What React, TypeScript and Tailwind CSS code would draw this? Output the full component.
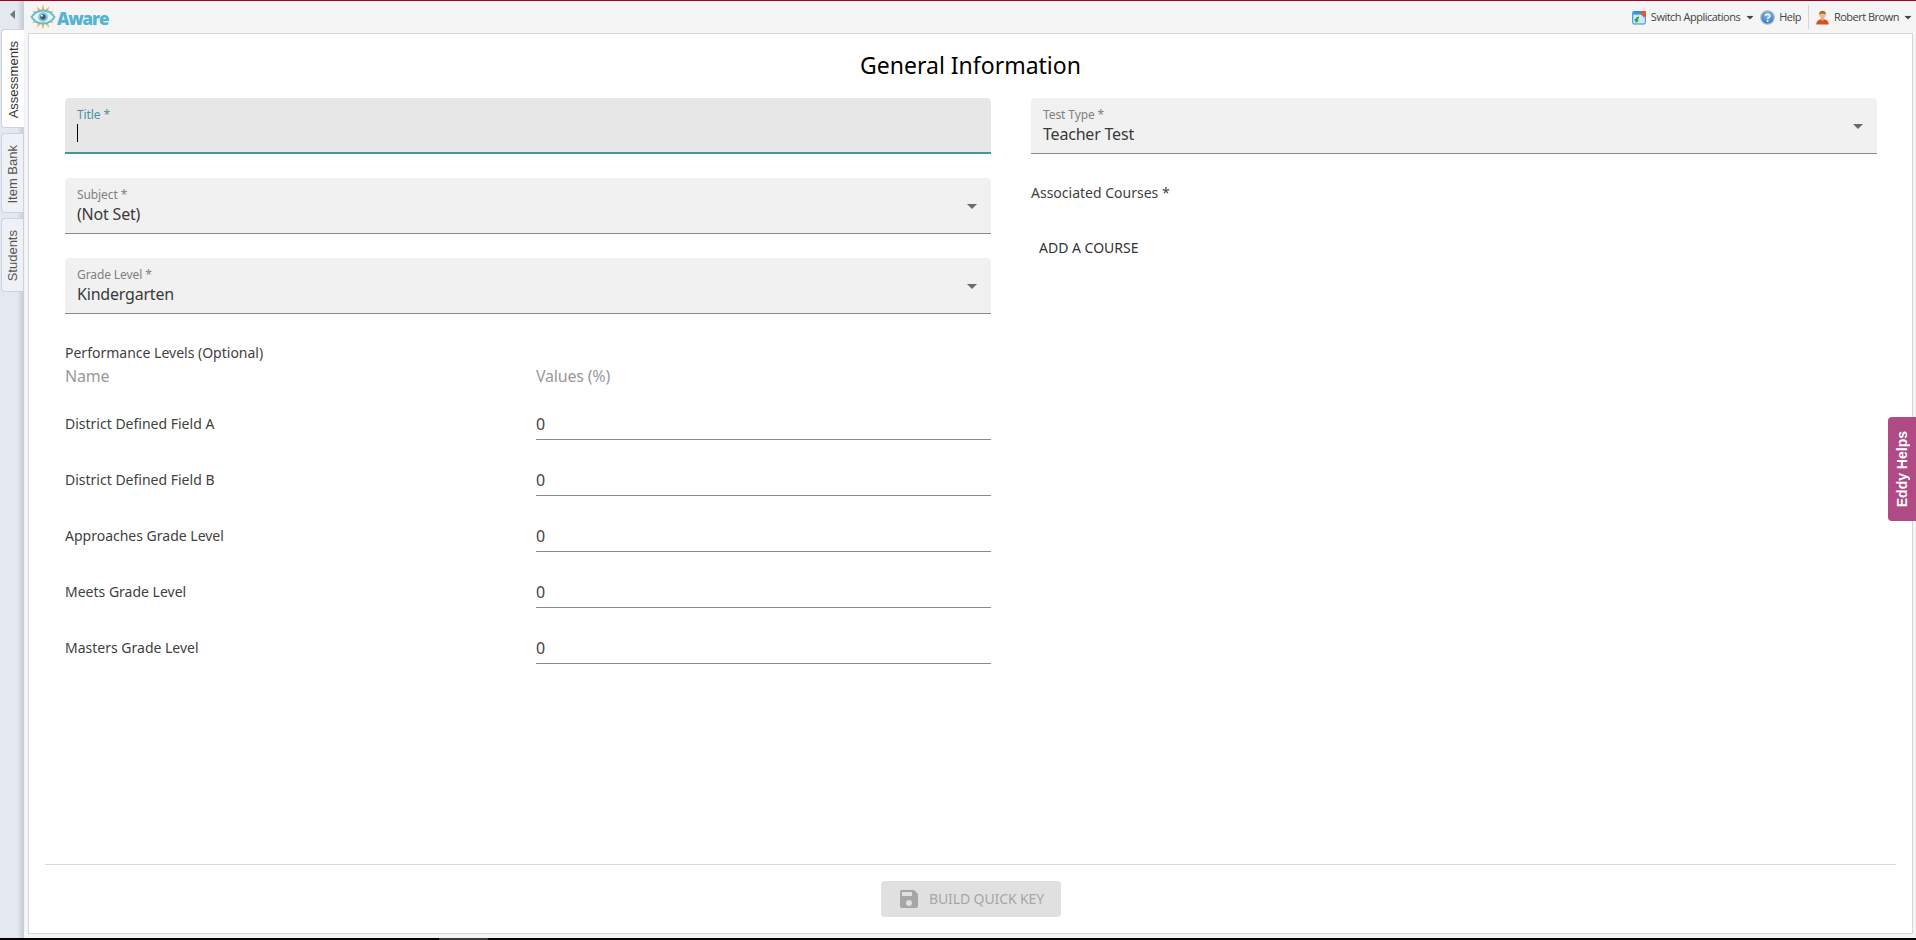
const ubuntu = "font-['Noto_Sans',sans-serif]";

function Caret({ className = "" }: { className?: string }) {
  return (
    <svg width="10" height="5" viewBox="0 0 10 5" className={className}>
      <path d="M0 0h10L5 5z" fill="currentColor" />
    </svg>
  );
}

function Logo() {
  const rays = Array.from({ length: 12 }, (_, i) => i * 30);
  return (
    <div className="flex items-center">
      <svg width="26" height="26" viewBox="0 0 26 26">
        {rays.map((r) => (
          <path key={r} d="M13 0.5l1.6 6h-3.2z" fill="#f4b04f" transform={`rotate(${r} 13 13)`} />
        ))}
        <circle cx="13" cy="13" r="7" fill="#f9d59a" />
        <path d="M1.5 13C5 7.5 9 6.5 13 6.5s8 1 11.5 6.5C21 18.5 17 19.5 13 19.5S5 18.500 1.500 13z" fill="#e6f4f8" stroke="#63bad3" strokeWidth="1.8" />
        <circle cx="13" cy="13" r="5" fill="#8ccbdd" />
        <circle cx="13" cy="13" r="2.800" fill="#4d5a66" />
        <circle cx="11.800" cy="11.800" r="1" fill="#fff" />
      </svg>
      <span className="ml-[1px] mt-[3px] font-['Open_Sans',sans-serif] text-[17px] font-extrabold leading-none tracking-[-1.1px] text-[#55b4d0]">Aware</span>
    </div>
  );
}

function SwitchIcon() {
  return (
    <svg width="15" height="15" viewBox="0 0 15 15">
      <rect x="0.700" y="1.500" width="12.600" height="12.500" rx="1.200" fill="#cfe8fb" stroke="#2a8be0" />
      <rect x="1.200" y="2" width="11.600" height="2.600" fill="#2f9bf0" />
      <path d="M8.500 1h5.500v5.500h-1.500v1.500L8.500 4z" fill="#e8572a" />
      <path d="M6.500 6.500C4.500 6.800 3.800 8 3.600 9.200L2 8.800l1.800 4 3.600-2-1.600-.6c.2-1 .6-2 1.500-2.400z" fill="#2fb02f" />
    </svg>
  );
}

function HelpIcon() {
  return (
    <svg width="15" height="15" viewBox="0 0 15 15">
      <defs>
        <radialGradient id="helpBall" cx="50%" cy="30%" r="75%">
          <stop offset="0%" stopColor="#8dc0ee" />
          <stop offset="100%" stopColor="#2a6cc0" />
        </radialGradient>
      </defs>
      <circle cx="7.500" cy="7.500" r="6.700" fill="url(#helpBall)" stroke="#a8b6c6" strokeWidth="1.200" />
      <path d="M5.500 5.900c.3-2.400 4.300-2.200 4.200.2 0 1.700-2 1.500-2 3" fill="none" stroke="#fff" strokeWidth="1.500" />
      <circle cx="7.600" cy="11" r="1" fill="#fff" />
    </svg>
  );
}

function UserIcon() {
  return (
    <svg width="13" height="15" viewBox="0 0 13 15">
      <path d="M0.300 14.500c0-3.800 2.400-5.200 6.200-5.200s6.200 1.400 6.200 5.200z" fill="#d6511f" />
      <rect x="5" y="7.500" width="3" height="3" fill="#e6a878" />
      <circle cx="6.500" cy="4.800" r="3.300" fill="#eeb98a" />
      <path d="M3.100 4.600C3 1.500 5 .8 6.500 .8s3.500.7 3.400 3.800C8.600 3.300 4.500 3.300 3.100 4.600z" fill="#a8702a" />
    </svg>
  );
}

function FilledField({
  label,
  value,
  focused,
  select,
  className = "",
}: {
  label: string;
  value?: string;
  focused?: boolean;
  select?: boolean;
  className?: string;
}) {
  return (
    <div
      className={`relative h-14 rounded-t px-3 pt-[9px] ${
        focused ? "bg-[#e7e7e7] border-b-2 border-[#4c919e]" : "bg-[#f1f1f1] border-b border-[#8a8a8a]"
      } ${className}`}
    >
      <div className={`text-xs leading-[16px] tracking-[-0.1px] ${focused ? "text-[#4c919e]" : "text-[#808080]"}`}>{label}</div>
      {focused ? (
        <div className="mt-[1px] h-[18px] w-px bg-black" />
      ) : (
        <div className="-mt-px text-base leading-[24px] tracking-[-0.2px] text-[#3a3a3a]">{value}</div>
      )}
      {select && <Caret className="absolute right-[14px] top-[26px] text-[#6b6b6b]" />}
    </div>
  );
}

function LevelRow({ label }: { label: string }) {
  return (
    <div className="flex h-[56px] items-start">
      <div className="w-[471px] pt-[13px] text-sm leading-[24px] text-[#3f3f3f]">{label}</div>
      <div className="h-[41px] flex-1 border-b border-[#8a8a8a] pt-[13px] text-base leading-[24px] text-[#444]">0</div>
    </div>
  );
}

function Tab({ label, h, active }: { label: string; h: string; active?: boolean }) {
  return (
    <div
      className={`flex ${h} items-center justify-center rounded-l border border-r-0 border-[#ccd2e0] pt-[2px] ${
        active ? "w-[23px] bg-white text-[#333]" : "w-[22px] bg-[#eef1f5] text-[#555]"
      }`}
    >
      <span className="rotate-180 font-['Liberation_Sans',sans-serif] text-[13px] leading-none [writing-mode:vertical-rl]">{label}</span>
    </div>
  );
}

export default function App() {
  return (
    <div className={`relative flex h-[940px] w-[1916px] flex-col overflow-hidden bg-[#e4e9ef] ${ubuntu}`}>
      <div className="h-px bg-[#a5001e]" />
      <div className="flex min-h-0 flex-1">
        {/* left rail */}
        <div className="flex w-[24px] flex-col items-end bg-[linear-gradient(to_right,#e4e9ef_72%,#c6cdd3_96%,#cfd5e3_100%)]">
          <div className="flex h-[28px] w-full items-center justify-center pb-[1px] text-[#6f7780]">
            <svg width="5" height="9" viewBox="0 0 5 9"><path d="M5 0v9L0 4.500z" fill="currentColor" /></svg>
          </div>
          <div className="flex flex-col gap-[5px] pl-[2px]">
            <Tab label="Assessments" h="h-[99px]" active />
            <Tab label="Item Bank" h="h-[80px]" />
            <Tab label="Students" h="h-[74px]" />
          </div>
        </div>
        {/* main */}
        <div className="flex min-w-0 flex-1 flex-col bg-[#f5f5f5]">
          <div className="flex h-[32px] items-center justify-between pr-[3px] pl-[6px]">
            <div className="-mt-[1px]"><Logo /></div>
            <div className="flex items-center font-['Open_Sans',sans-serif] text-[11px] tracking-[-0.5px] text-[#444]">
              <SwitchIcon />
              <span className="ml-[4px]">Switch Applications</span>
              <Caret className="ml-[5px] scale-75" />
              <span className="ml-[5px]"><HelpIcon /></span>
              <span className="ml-[4px]">Help</span>
              <span className="mx-[7px] h-[24px] w-px bg-[#cfd5e3]" />
              <UserIcon />
              <span className="ml-[5px]">Robert Brown</span>
              <Caret className="ml-[4px] scale-75" />
            </div>
          </div>
          {/* content panel */}
          <div className="ml-[4px] mr-[3px] flex h-[901px] flex-col border border-[#d3d6e4] bg-white">
            <h1 className="pt-[15px] text-center text-[23px] leading-[32px] text-black">General Information</h1>
            <div className="flex flex-1 gap-[40px] pl-[36px] pr-[35px] pt-[17px]">
              <div className="flex w-[926px] flex-col">
                <FilledField label="Title *" focused />
                <FilledField label="Subject *" value="(Not Set)" select className="mt-6" />
                <FilledField label="Grade Level *" value="Kindergarten" select className="mt-6" />
                <div className="mt-[28px] text-sm leading-[22px] text-[#3f3f3f]">Performance Levels (Optional)</div>
                <div className="flex text-base leading-[24px] tracking-[-0.2px] text-[#999]">
                  <div className="w-[471px]">Name</div>
                  <div>Values (%)</div>
                </div>
                <div className="mt-[11px]">
                  <LevelRow label="District Defined Field A" />
                  <LevelRow label="District Defined Field B" />
                  <LevelRow label="Approaches Grade Level" />
                  <LevelRow label="Meets Grade Level" />
                  <LevelRow label="Masters Grade Level" />
                </div>
              </div>
              <div className="flex flex-1 flex-col">
                <FilledField label="Test Type *" value="Teacher Test" select />
                <div className="mt-[28px] text-sm leading-[22px] text-[#3f3f3f]">Associated Courses *</div>
                <div className="mt-[32px] pl-2 text-sm leading-[24px] text-[#333]">ADD A COURSE</div>
              </div>
            </div>
            <div className="mx-[16px] flex h-[69px] justify-center border-t border-[#d9d9d9] pt-[16px]">
              <div className="flex h-[36px] w-[180px] items-center justify-center gap-[8px] rounded bg-[#e0e0e0] text-sm tracking-[-0.1px] text-[#a6a6a6]">
                <svg width="24" height="24" viewBox="0 0 24 24"><path fill="currentColor" d="M17 3H5a2 2 0 0 0-2 2v14a2 2 0 0 0 2 2h14a2 2 0 0 0 2-2V7zm-5 16a3 3 0 1 1 0-6 3 3 0 0 1 0 6zm3-10H5V5h10z" /></svg>
                BUILD QUICK KEY
              </div>
            </div>
          </div>
          <div className="flex-1" />
        </div>
      </div>
      <div className="flex h-[2px] bg-black pl-[439px]">
        <div className="h-full w-[49px] bg-[#3a3a3a]" />
      </div>
      {/* Eddy Helps */}
      <div className="absolute right-0 top-[417px] flex h-[104px] w-[28px] items-center justify-center rounded-l bg-[#b04a84]">
        <span className="rotate-180 font-['Liberation_Sans',sans-serif] text-sm font-bold leading-none text-white [writing-mode:vertical-rl]">Eddy Helps</span>
      </div>
    </div>
  );
}
